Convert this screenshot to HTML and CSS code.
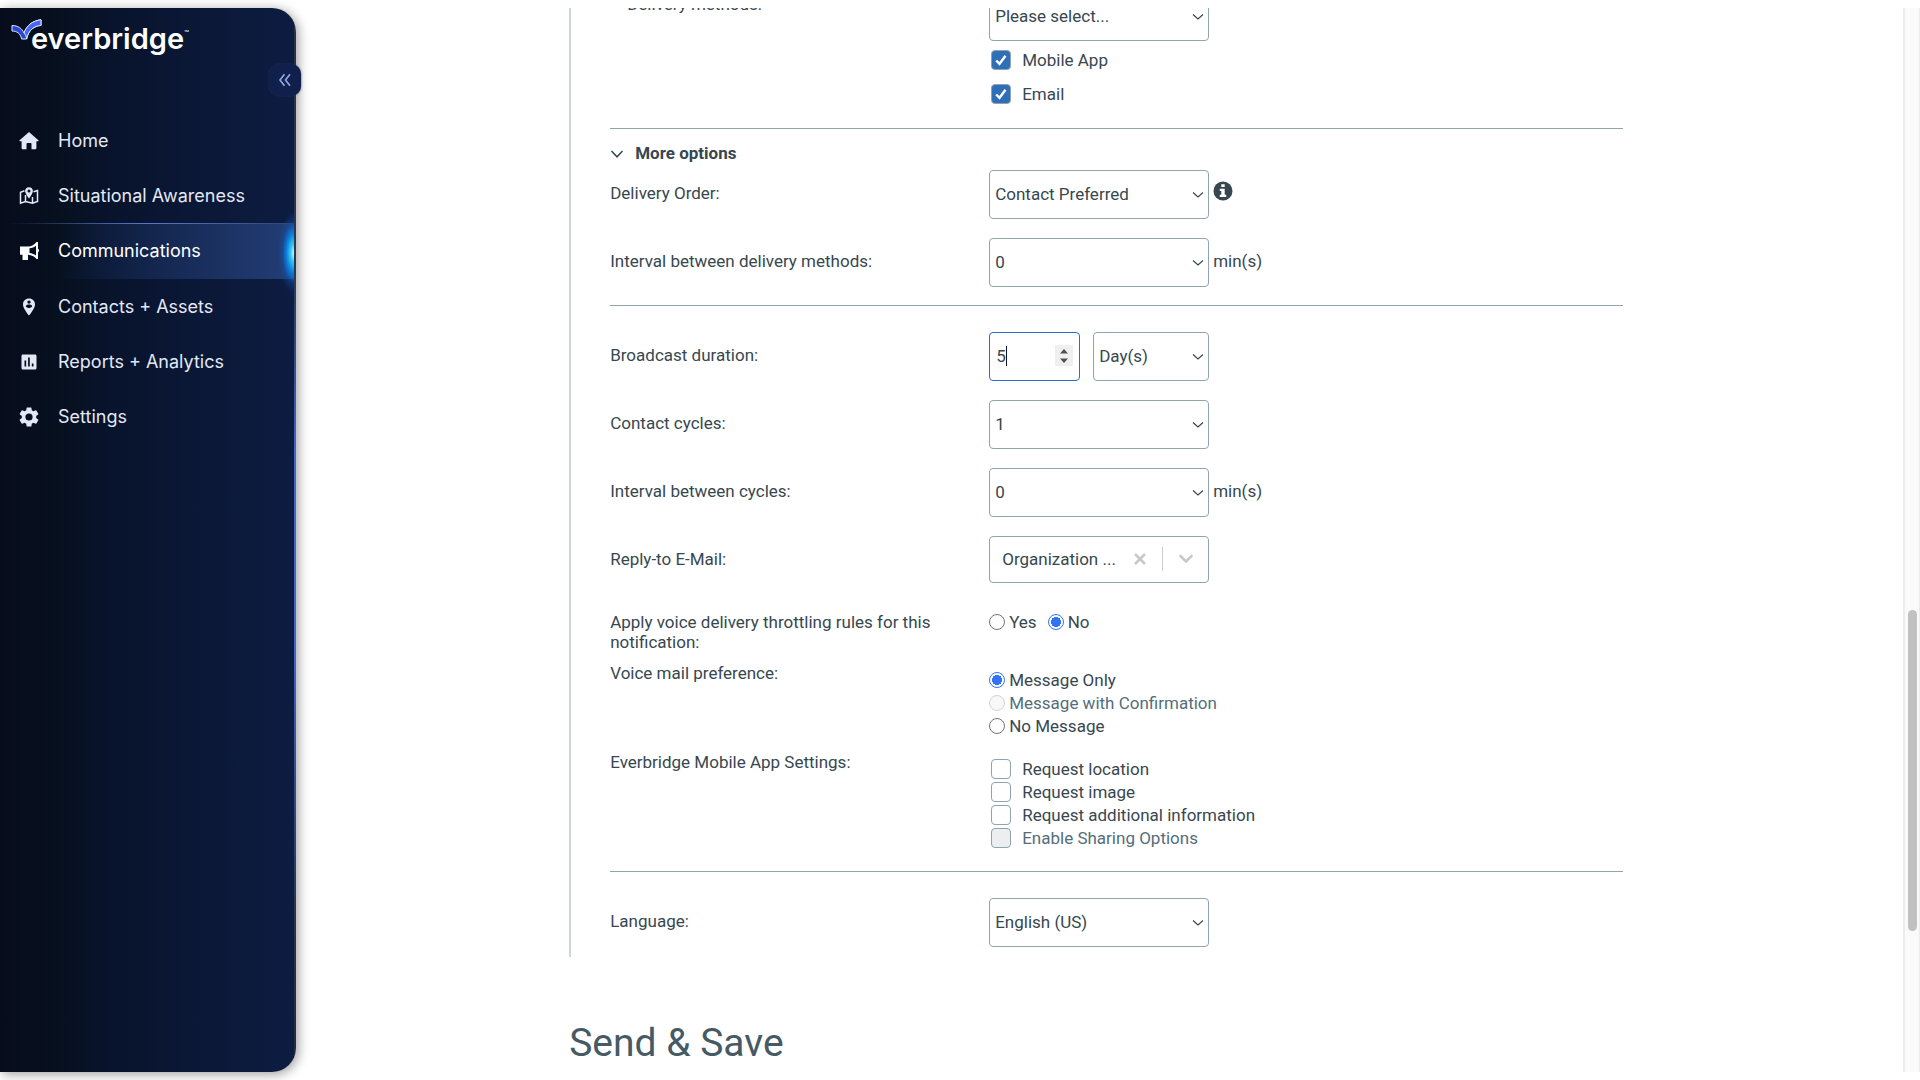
FILE: index.html
```html
<!DOCTYPE html>
<html lang="en">
<head>
<meta charset="utf-8">
<title>Everbridge - Communications</title>
<link rel="stylesheet" href="styles.css">
</head>
<body>
<aside class="sidebar">
  <a class="logo" href="#" aria-label="everbridge">
    <svg class="logo-mark" viewBox="0 0 31 21" aria-hidden="true">
      <path d="M1 6.500C7 6.500 11 9.500 13 14c2.500-7.500 9-12.500 17-13.200v5.600c-7 .6-12.500 4.600-14.400 13.600h-5C9.500 14.500 6 12 1 12z" fill="#2a49d2" stroke="#dfe6ff" stroke-width="1"/>
      <path d="M13 14c2.500-7.500 9-12.500 17-13.200v5.600c-7 .6-12.500 4.600-14.400 13.600C15.500 17.500 14.500 15.500 13 14z" fill="#4668f5" stroke="#dfe6ff" stroke-width="1"/>
    </svg>
    <span class="logo-text">everbridge</span><span class="logo-tm">™</span>
  </a>
  <button class="collapse" type="button" aria-label="Collapse menu">
    <svg width="14" height="14" viewBox="0 0 14 14" fill="none" stroke="#8ea6dc" stroke-width="1.700"><path d="M6.500 1.200 2 7l4.500 5.800M12 1.200 7.500 7l4.500 5.800"/></svg>
  </button>
  <nav class="nav">
    <a class="nav-item" href="#">
      <svg class="nav-icon" viewBox="0 0 20 20" fill="currentColor"><path d="M10 1 .6 9.200c-.4.400-.1 1 .4 1H2.600V17c0 .8.500 1.300 1.300 1.300h3.600v-5.500c0-.5.400-.9.900-.9h3.200c.5 0 .9.400.9.900v5.500h3.600c.8 0 1.300-.5 1.300-1.300v-6.800H19c.5 0 .8-.6.400-1z"/></svg>
      <span>Home</span>
    </a>
    <a class="nav-item" href="#">
      <svg class="nav-icon" viewBox="0 0 20 20" fill="none" stroke="currentColor" stroke-width="1.500"><path d="M5.500 4.800 1.500 6.300v11l5-1.800 7 1.800 5-1.800V4.600l-4 1.200M6.500 9v6.500M13.500 11v6.300"/><path fill="currentColor" stroke="none" fill-rule="evenodd" d="M10 1.200c-2.300 0-3.900 1.700-3.900 3.800 0 2.700 3.900 7.500 3.900 7.500s3.900-4.800 3.900-7.500c0-2.100-1.600-3.800-3.900-3.800zm0 2.400a1.500 1.500 0 1 1 0 3 1.500 1.500 0 0 1 0-3z"/></svg>
      <span>Situational Awareness</span>
    </a>
    <a class="nav-item active" href="#" aria-current="page">
      <svg class="nav-icon" viewBox="0 0 20 20" fill="currentColor"><path fill-rule="evenodd" d="M1 5.500h8C12.500 5.500 15.500 3.500 17.500 1H19v6.700c.7.300 1 1 1 1.800s-.3 1.500-1 1.800V18h-1.500c-2-2.500-5-4-8.500-4.200V19H3.500v-5.300H1zM10.500 7.300v4.600c2.500.3 4.800 1.200 6.500 2.500V4.700c-1.700 1.400-4 2.300-6.500 2.600z"/></svg>
      <span>Communications</span>
    </a>
    <a class="nav-item" href="#">
      <svg class="nav-icon" viewBox="0 0 20 20" fill="currentColor"><path fill-rule="evenodd" d="M10 1.500c-3.500 0-6 2.600-6 5.900 0 4.100 6 11.100 6 11.100s6-7 6-11.100c0-3.300-2.500-5.900-6-5.900zm0 1.900a1.700 1.700 0 1 1 0 3.400 1.700 1.700 0 0 1 0-3.400zM6.800 9.500c.1-1.300 1.500-1.900 3.200-1.900s3.100.6 3.200 1.900c-.7.900-1.800 1.500-3.200 1.500s-2.500-.6-3.200-1.500z"/></svg>
      <span>Contacts + Assets</span>
    </a>
    <a class="nav-item" href="#">
      <svg class="nav-icon" viewBox="0 0 20 20" fill="currentColor"><path fill-rule="evenodd" d="M4 2.500h12c.9 0 1.500.6 1.500 1.500v12c0 .9-.6 1.500-1.500 1.500H4c-.9 0-1.500-.6-1.500-1.500V4c0-.9.600-1.500 1.500-1.500zM5.500 8.500v6h1.700v-6zM9.100 5.500v9h1.700v-9zM12.800 11.500v3h1.700v-3z"/></svg>
      <span>Reports + Analytics</span>
    </a>
    <a class="nav-item" href="#">
      <svg class="nav-icon" viewBox="2 2 20 20" fill="currentColor"><path d="M19.140 12.940c.04-.3.060-.61.060-.94s-.02-.64-.07-.94l2.030-1.580a.49.490 0 0 0 .12-.61l-1.920-3.320a.49.490 0 0 0-.59-.22l-2.390.96a7 7 0 0 0-1.620-.94l-.36-2.540a.48.480 0 0 0-.48-.41h-3.840a.47.470 0 0 0-.47.410l-.36 2.540c-.59.240-1.130.570-1.620.94l-2.390-.96a.48.480 0 0 0-.59.220L2.740 8.870a.48.480 0 0 0 .12.610l2.030 1.580c-.05.300-.09.630-.09.940s.02.640.07.940l-2.030 1.580a.49.490 0 0 0-.12.610l1.920 3.320c.12.220.37.290.59.220l2.390-.96c.5.380 1.030.700 1.620.94l.36 2.540c.05.240.24.410.48.410h3.840c.24 0 .44-.17.470-.41l.36-2.540a6.800 6.800 0 0 0 1.620-.94l2.390.96c.22.080.47 0 .59-.22l1.920-3.320a.47.470 0 0 0-.12-.61zM12 15.600a3.600 3.600 0 1 1 0-7.200 3.600 3.600 0 0 1 0 7.200z"/></svg>
      <span>Settings</span>
    </a>
  </nav>
</aside>

<main class="main">
  <form class="content">
    <section class="panel">
      <div class="row">
        <label class="label sub-label" for="methods">Delivery methods:</label>
        <div class="field">
          <select id="methods" class="select"><option>Please select...</option></select>
          <div class="method-list">
            <label class="check"><input type="checkbox" checked> Mobile App</label>
            <label class="check"><input type="checkbox" checked> Email</label>
          </div>
        </div>
      </div>
      <hr class="rule">
      <button class="more" type="button" aria-expanded="true">
        <svg width="14" height="16" viewBox="0 0 14 16" fill="none" stroke="currentColor" stroke-width="1.500"><path d="M1.500 6 7 11.800 12.500 6"/></svg>
        More options
      </button>
      <div class="rows">
        <div class="row">
          <label class="label" for="order">Delivery Order:</label>
          <div class="field inline">
            <select id="order" class="select"><option>Contact Preferred</option></select>
            <svg class="info" viewBox="0 0 20 20" role="img" aria-label="Information"><circle cx="10" cy="10" r="9.500" fill="#37474f"/><path fill="#fff" d="M8.300 3.200h3.400v2.900H8.300zM6.800 7.800h4.900v6h1.500v2.300H6.800v-2.300h1.500v-3.700H6.800z"/></svg>
          </div>
        </div>
        <div class="row">
          <label class="label" for="interval">Interval between delivery methods:</label>
          <div class="field inline">
            <select id="interval" class="select"><option>0</option></select>
            <span class="unit">min(s)</span>
          </div>
        </div>
      </div>
      <hr class="rule rule-gap">
      <div class="rows">
        <div class="row">
          <label class="label" for="duration">Broadcast duration:</label>
          <div class="field duration">
            <div class="number">
              <input id="duration" type="number" value="5">
              <span class="caret"></span>
              <span class="spin" aria-hidden="true">
                <svg width="8" height="14" viewBox="0 0 8 14" fill="#505050"><path d="M0 4.500 4 0l4 4.500zM0 9.500h8L4 14z"/></svg>
              </span>
            </div>
            <select class="select" aria-label="Duration unit"><option>Day(s)</option></select>
          </div>
        </div>
        <div class="row">
          <label class="label" for="cycles">Contact cycles:</label>
          <div class="field"><select id="cycles" class="select"><option>1</option></select></div>
        </div>
        <div class="row">
          <label class="label" for="cycle-interval">Interval between cycles:</label>
          <div class="field inline">
            <select id="cycle-interval" class="select"><option>0</option></select>
            <span class="unit">min(s)</span>
          </div>
        </div>
        <div class="row">
          <span class="label" id="reply-label">Reply-to E-Mail:</span>
          <div class="field">
            <div class="combo" role="group" aria-labelledby="reply-label">
              <span class="combo-value">Organization ...</span>
              <button type="button" aria-label="Clear"><svg width="12" height="12" viewBox="0 0 12 12" fill="none" stroke="#c8c8c8" stroke-width="2.600"><path d="m1 1 10 10M11 1 1 11"/></svg></button>
              <span class="combo-line"></span>
              <button type="button" aria-label="Open"><svg width="14" height="10" viewBox="0 0 14 10" fill="none" stroke="#c8c8c8" stroke-width="2.600" stroke-linecap="round"><path d="m1.500 2 5.500 5.500L12.500 2"/></svg></button>
            </div>
          </div>
        </div>
      </div>
      <div class="row throttle">
        <span class="label flush" id="throttle-label">Apply voice delivery throttling rules for this notification:</span>
        <div class="field radios-inline" role="radiogroup" aria-labelledby="throttle-label">
          <label class="radio"><input type="radio" name="throttle"> Yes</label>
          <label class="radio"><input type="radio" name="throttle" checked> No</label>
        </div>
      </div>
      <div class="row voice">
        <span class="label flush" id="voice-label">Voice mail preference:</span>
        <div class="field stack" role="radiogroup" aria-labelledby="voice-label">
          <label class="radio"><input type="radio" name="voice" checked> Message Only</label>
          <label class="radio muted"><input type="radio" name="voice" disabled> Message with Confirmation</label>
          <label class="radio"><input type="radio" name="voice"> No Message</label>
        </div>
      </div>
      <div class="row app">
        <span class="label flush" id="app-label">Everbridge Mobile App Settings:</span>
        <div class="field stack" role="group" aria-labelledby="app-label">
          <label class="check"><input type="checkbox"> Request location</label>
          <label class="check"><input type="checkbox"> Request image</label>
          <label class="check"><input type="checkbox"> Request additional information</label>
          <label class="check muted"><input type="checkbox" disabled> Enable Sharing Options</label>
        </div>
      </div>
      <hr class="rule rule-last">
      <div class="row">
        <label class="label" for="language">Language:</label>
        <div class="field"><select id="language" class="select"><option>English (US)</option></select></div>
      </div>
    </section>
    <h1 class="heading">Send &amp; Save</h1>
  </form>
</main>
<div class="scrollbar" aria-hidden="true"><span class="thumb"></span></div>
</body>
</html>
```
FILE: styles.css
```css
* { box-sizing: border-box; }

body {
  margin: 0;
  padding: 8px 0;
  height: 100vh;
  display: flex;
  overflow: hidden;
  background: #fff;
  color: #37474f;
  font: 17px/20px Roboto, "Liberation Sans", sans-serif;
}

button {
  margin: 0;
  padding: 0;
  border: 0;
  background: none;
  color: inherit;
  font: inherit;
}

/* Sidebar */
.sidebar {
  position: relative;
  flex: 0 0 296px;
  border-radius: 0 24px 24px 0;
  background:
    linear-gradient(#2a3046, #2e3650 25%, #4366cc 42%, #4366cc 60%, #2a3350 85%, #23283c) right / 2px 100% no-repeat,
    linear-gradient(90deg, #070c1d, #06101f 20%, #08132b 35%, #0d1c42);
  box-shadow: 2px 2px 12px rgba(0, 0, 0, 0.4);
}

.logo {
  display: flex;
  padding: 11px 0 0 11px;
  color: #fff;
  text-decoration: none;
}

.logo-mark {
  width: 31px;
  height: 21px;
}

.logo-text {
  margin-left: -11px;
  font: 600 29px/40px Inter, sans-serif;
}

.logo-tm {
  font: 8px/28px Inter, sans-serif;
}

.collapse {
  position: absolute;
  top: 56px;
  right: -5px;
  width: 32px;
  height: 32px;
  display: grid;
  place-items: center;
  border-radius: 10px;
  background: #111f4d;
  box-shadow: 0 0 2px #2a3350;
}

.nav { margin-top: 54px; }

.nav-item {
  position: relative;
  display: flex;
  align-items: center;
  gap: 19px;
  height: 55px;
  padding-left: 19px;
  color: #e2e8f6;
  font: 18px/24px Inter, sans-serif;
  text-decoration: none;
}

.nav-icon {
  width: 20px;
  height: 20px;
}

.nav-item.active {
  height: 56px;
  margin-right: 2px;
  color: #fff;
  background:
    linear-gradient(90deg, transparent 3%, #5a78cc 50%, #2c4479) top / 100% 1px no-repeat,
    linear-gradient(90deg, transparent 20%, #162a55 60%, #233e77);
}

.nav-item.active::after {
  content: "";
  position: absolute;
  right: 0;
  top: -11px;
  width: 16px;
  height: 82px;
  background: radial-gradient(ellipse 100% 50% at right, #c8fbff, #35c5f6 22%, #0a7fd8 48%, rgba(10, 90, 190, 0.4) 72%, transparent);
}

/* Form */
.main {
  flex: 1;
  min-width: 0;
  overflow: hidden;
}

.content {
  margin-top: -16px;
  padding: 0 17%;
}

.panel {
  padding: 0 7px 10px 39px;
  border-left: 2px solid #cdd8dc;
}

.row {
  display: grid;
  grid-template-columns: 379px 1fr;
}

.rows {
  display: grid;
  gap: 19px;
}

.label { padding: 13px 40px 0 0; }
.label.sub-label { padding: 2px 0 0 17px; }
.label.flush { padding-top: 0; }

.select {
  appearance: none;
  display: block;
  width: 220px;
  height: 49px;
  padding: 0 24px 2px 5px;
  border: 1px solid #90a4ae;
  border-radius: 4px;
  background: #fff url("data:image/svg+xml,%3Csvg xmlns='http://www.w3.org/2000/svg' width='12' height='8' fill='none' stroke='%2337474f' stroke-width='1.200'%3E%3Cpath d='M1 1.500l5 4.500 5-4.500'/%3E%3C/svg%3E") right 4px center no-repeat;
  color: inherit;
  font: inherit;
}

.method-list {
  display: grid;
  grid-auto-rows: 34px;
  margin-top: 2px;
}

.rule {
  height: 1px;
  margin: 17px 0 14px;
  border: 0;
  background: #90a4ae;
}

.rule-gap { margin: 18px 0 26px; }
.rule-last { margin: 22px 0 26px; }

.more {
  display: flex;
  align-items: center;
  gap: 11px;
  margin-bottom: 7px;
  font-weight: 700;
}

.inline {
  display: flex;
  gap: 4px;
}

.info {
  width: 20px;
  height: 20px;
  margin-top: 11px;
}

.unit { padding-top: 13px; }

.duration {
  display: flex;
  gap: 13px;
}

.duration .select { width: 116px; }

.number {
  position: relative;
  display: flex;
  align-items: center;
  width: 91px;
  height: 49px;
  padding: 0 6px 2px;
  border: 1px solid #2f6eb8;
  border-radius: 4px;
}

.number input {
  appearance: textfield;
  flex: 1;
  min-width: 0;
  padding: 0;
  border: 0;
  outline: 0;
  color: inherit;
  font: inherit;
}

.number input::-webkit-inner-spin-button { display: none; }

.caret {
  position: absolute;
  left: 16px;
  top: 13px;
  width: 1px;
  height: 20px;
  background: #111;
}

.spin {
  width: 18px;
  height: 21px;
  display: grid;
  place-items: center;
  background: #efefef;
}

.combo {
  display: flex;
  align-items: center;
  width: 220px;
  height: 47px;
  padding: 0 15px 2px 12px;
  border: 1px solid #90a4ae;
  border-radius: 4px;
}

.combo-value { flex: 1; }

.combo button {
  display: grid;
  place-items: center;
}

.combo-line {
  width: 1px;
  height: 24px;
  margin: 0 16px;
  background: #ccc;
}

.throttle { margin-top: 29px; }
.voice { margin-top: 11px; }
.app { margin-top: 15px; }

.radios-inline {
  display: flex;
  align-items: start;
  gap: 11px;
}

.stack {
  display: grid;
  grid-auto-rows: 23px;
  padding-top: 5px;
}

.radio,
.check {
  display: flex;
  align-items: center;
  gap: 4px;
}

.check {
  gap: 11px;
  padding-left: 2px;
}

.muted { color: #546e7a; }

.radio input {
  appearance: none;
  width: 16px;
  height: 16px;
  margin: 0;
  border: 1px solid #767676;
  border-radius: 50%;
}

.radio input:checked {
  border-color: #3374f6;
  background: radial-gradient(circle, #3374f6 5px, #fff 5px);
}

.radio input:disabled {
  border-color: #d4d4d4;
  background: #f8f8f8;
}

.check input {
  appearance: none;
  width: 20px;
  height: 20px;
  margin: 0;
  border: 1px solid #90a4ae;
  border-radius: 4px;
}

.check input:checked {
  background: #2f6eb8 url("data:image/svg+xml,%3Csvg xmlns='http://www.w3.org/2000/svg' width='12' height='12' fill='none' stroke='white' stroke-width='2.400'%3E%3Cpath d='M1.200 6.500l3.300 3.300 6-8'/%3E%3C/svg%3E") center no-repeat;
}

.check input:disabled { background: #eceef0; }

.heading {
  margin: 62px 0 0;
  color: #455a64;
  font-size: 39px;
  font-weight: 400;
  line-height: 48px;
}

/* Page scrollbar */
.scrollbar {
  flex: 0 0 17px;
  display: grid;
  grid-template-rows: 602fr 321fr 141fr;
  justify-items: center;
  border-left: 2px solid #ededed;
  border-right: 1px solid #ededed;
  background: #fafafa;
}

.thumb {
  grid-row: 2;
  width: 9px;
  border-radius: 5px;
  background: #c1c1c1;
}
```
